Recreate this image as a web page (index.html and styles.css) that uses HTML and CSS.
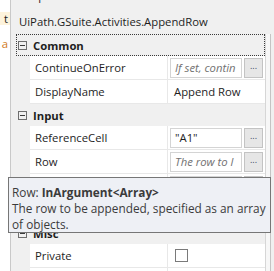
FILE: index.html
```html
<html>
    <head>
        <title>Properties</title>
        <link rel="stylesheet" href="styles.css">
    </head>
    <body>
        <div class="frame">
            <div class="side">
                <div class="side-item sel"><span>t</span></div>
                <div class="side-item"><span class="orange">a</span></div>
            </div>

            <div class="panel">
                <div class="peek"><span>Ap</span></div>
                <div class="title">UiPath.GSuite.Activities.AppendRow</div>

                <div class="body">
                    <div class="grid">
                        <div class="cat focus"><span class="toggle"></span>Common</div>
                        <div class="prop">
                            <div class="indent"></div>
                            <div class="name">ContinueOnError</div>
                            <div class="val"><div class="box ph">If set, contin</div><div class="dots">...</div></div>
                        </div>
                        <div class="prop">
                            <div class="indent"></div>
                            <div class="name">DisplayName</div>
                            <div class="val plain">Append Row</div>
                        </div>

                        <div class="cat"><span class="toggle"></span>Input</div>
                        <div class="prop">
                            <div class="indent"></div>
                            <div class="name">ReferenceCell</div>
                            <div class="val"><div class="box">"A1"</div><div class="dots">...</div></div>
                        </div>
                        <div class="prop">
                            <div class="indent"></div>
                            <div class="name">Row</div>
                            <div class="val"><div class="box ph">The row to l</div><div class="dots">...</div></div>
                        </div>
                        <!-- rows hidden under the tooltip -->
                        <div class="prop">
                            <div class="indent"></div>
                            <div class="name"></div>
                            <div class="val"><div class="box"></div><div class="dots"></div></div>
                        </div>
                        <div class="prop">
                            <div class="indent"></div>
                            <div class="name"></div>
                            <div class="val"><div class="box"></div><div class="dots"></div></div>
                        </div>

                        <div class="cat"><span class="toggle"></span>Misc</div>
                        <div class="prop">
                            <div class="indent"></div>
                            <div class="name">Private</div>
                            <div class="val"><span class="check"></span></div>
                        </div>
                        <div class="prop">
                            <div class="indent"></div>
                            <div class="name"></div>
                            <div class="val"></div>
                        </div>
                    </div>
                    <div class="scroll"><div class="track"></div></div>
                </div>
            </div>

            <div class="tip">
                <div>Row: <b>InArgument&lt;Array&gt;</b></div>
                <div>The row to be appended, specified as an array</div>
                <div>of objects.</div>
            </div>
        </div>
    </body>
</html>
```

FILE: styles.css
```css
* {
    box-sizing: border-box;
}

body {
    margin: 0;
    width: 274px;
    height: 271px;
    overflow: hidden;
    font-family: "Open Sans", "Noto Sans", sans-serif;
    font-size: 11.3px;
    color: #1e1e1e;
    background: #f0f0f0;
}

.frame {
    display: flex;
    height: 271px;
    position: relative;
}

/* cut-off toolbox on the left */
.side {
    width: 11px;
    background: #fff;
    border-right: 1px solid #c9c9c9;
    padding-top: 12px;
    display: flex;
    flex-direction: column;
    gap: 12px;
}

.side-item {
    height: 13px;
    line-height: 13px;
    overflow: hidden;
    display: flex;
    justify-content: flex-end;
    padding-right: 2px;
}

.side-item.sel {
    background: #fdf3dc;
}

.orange {
    color: #d07a1a;
}

.panel {
    flex: 1;
    display: flex;
    flex-direction: column;
    padding-left: 5px;
    min-height: 0;
}

.peek {
    flex-shrink: 0;
    height: 9px;
    overflow: hidden;
    padding-left: 15px;
}

.peek span {
    display: block;
    line-height: 10px;
    margin-top: -9px;
}

.title {
    flex-shrink: 0;
    height: 25px;
    line-height: 25px;
    padding-left: 3px;
    white-space: nowrap;
}

.body {
    flex: 1;
    min-height: 0;
    overflow: hidden;
    display: flex;
}

.grid {
    width: 249px;
    flex-shrink: 0;
}

.scroll {
    flex: 1;
    background: #f7f7f7;
    border-left: 1px solid #d6d6d6;
}

.track {
    height: 100%;
    margin-left: 4px;
    border-left: 1px solid #c4c4c4;
    background: #f0f0f0;
}

/* categories */
.cat {
    height: 22px;
    display: flex;
    align-items: center;
    gap: 6px;
    padding-left: 2px;
    font-weight: 700;
    background: #f0f0f0;
}

.cat.focus {
    outline: 1px dotted #3a3a3a;
    outline-offset: -1px;
}

.toggle {
    width: 9px;
    height: 9px;
    border: 1px solid #6e6e6e;
    display: flex;
    align-items: center;
    justify-content: center;
}

.toggle::after {
    content: "";
    width: 5px;
    height: 1px;
    background: #3a3a3a;
}

/* property rows */
.prop {
    height: 24px;
    display: grid;
    grid-template-columns: 14px 138px 97px;
}

.indent {
    background: #f0f0f0;
}

.name {
    background: #fff;
    border-bottom: 1px solid #e8e8e8;
    border-right: 1px solid #e8e8e8;
    padding-left: 5px;
    line-height: 23px;
    white-space: nowrap;
}

.val {
    background: #fff;
    border-bottom: 1px solid #e8e8e8;
    display: flex;
    align-items: center;
    gap: 2px;
    padding: 0 2px;
}

.val.plain {
    padding-left: 6px;
    white-space: nowrap;
}

.box {
    width: 72px;
    height: 20px;
    border: 1px solid #d4d4d4;
    background: #fff;
    padding-left: 4px;
    line-height: 18px;
    white-space: nowrap;
    overflow: hidden;
}

.ph {
    font-style: italic;
    color: #727272;
}

.dots {
    width: 19px;
    height: 20px;
    background: #e6e6e6;
    border: 1px solid #c3c3c3;
    font-size: 9px;
    line-height: 14px;
    text-align: center;
    color: #3c4a66;
}

.check {
    width: 13px;
    height: 13px;
    margin-left: 5px;
    border: 1px solid #7a7a7a;
    background: #fff;
}

/* tooltip over the grid */
.tip {
    position: absolute;
    left: 8px;
    top: 177px;
    width: 263px;
    height: 56px;
    background: #eef0f5;
    border: 1px solid #767676;
    padding: 6px 3px 0;
    line-height: 16px;
    font-size: 11.8px;
    color: #3b3b3b;
    white-space: nowrap;
    overflow: hidden;
}
```
